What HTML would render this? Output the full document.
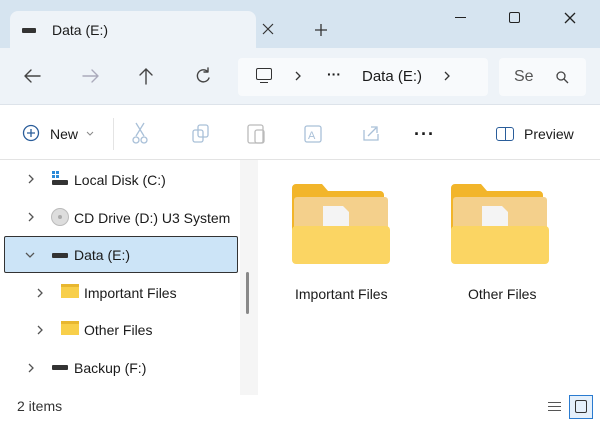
<!DOCTYPE html><html><head><style>
*{margin:0;padding:0;box-sizing:border-box}
body{width:600px;height:421px;overflow:hidden;font-family:"Liberation Sans",sans-serif;background:#fff;position:relative;color:#1a1a1a}
.a{position:absolute}
.t{font-size:14px;white-space:nowrap}
</style></head><body>
<div class="a" style="left:0;top:0;width:600px;height:50px;background:#d6e4f0"></div>
<div class="a" style="left:10px;top:11px;width:246px;height:40px;background:#eef3f8;border-radius:8px 8px 0 0"></div>
<div class="a" style="left:0;top:48px;width:600px;height:57px;background:#eef3f8;border-bottom:1px solid #dde3ea"></div>
<div class="a" style="left:22px;top:28px;width:14px;height:5px;background:#333;border-radius:1px"></div>
<div class="a t" style="left:52px;top:22px">Data (E:)</div>
<svg class="a" style="left:262px;top:23px" width="12" height="12" stroke="#333" stroke-width="1.2"><path d="M1 1l10 10M11 1L1 11"/></svg>
<svg class="a" style="left:314px;top:23px" width="14" height="14" stroke="#333" stroke-width="1.3"><path d="M7 1v12M1 7h12"/></svg>
<div class="a" style="left:455px;top:17px;width:11px;height:1px;background:#222"></div>
<div class="a" style="left:509px;top:12px;width:11px;height:11px;border:1.3px solid #222;border-radius:2px"></div>
<svg class="a" style="left:564px;top:12px" width="12" height="12" stroke="#222" stroke-width="1.3"><path d="M1 1l10 10M11 1L1 11"/></svg>
<svg class="a" style="left:0;top:60px" width="240" height="34" fill="none" stroke-width="1.4" stroke-linecap="round" stroke-linejoin="round">
<path d="M25 16h15M31 10l-6 6 6 6" stroke="#444"/>
<path d="M83 16h15M92 10l6 6-6 6" stroke="#aab"/>
<path d="M146 9v15M140 15l6-6 6 6" stroke="#444"/>
<path d="M208 12a6 6 0 1 0 1 6M208 8v4h-4" stroke="#444"/>
</svg>
<div class="a" style="left:238px;top:58px;width:250px;height:38px;background:#f8fafc;border-radius:4px"></div>
<div class="a" style="left:499px;top:58px;width:87px;height:38px;background:#f8fafc;border-radius:4px"></div>
<div class="a" style="left:256px;top:68px;width:16px;height:12px;border:1.4px solid #333;border-radius:2px"></div>
<div class="a" style="left:260px;top:82px;width:8px;height:1.4px;background:#333"></div>
<svg class="a" style="left:294px;top:71px" width="8" height="10" fill="none" stroke="#333" stroke-width="1.3"><path d="M2 1l4 4-4 4"/></svg>
<div class="a t" style="left:327px;top:66px;font-weight:bold">···</div>
<div class="a" style="left:362px;top:68px;font-size:15px">Data (E:)</div>
<svg class="a" style="left:443px;top:71px" width="8" height="10" fill="none" stroke="#333" stroke-width="1.3"><path d="M2 1l4 4-4 4"/></svg>
<div class="a" style="left:514px;top:68px;font-size:16px;color:#555">Se</div>
<svg class="a" style="left:555px;top:70px" width="14" height="14" fill="none" stroke="#444" stroke-width="1.3"><circle cx="6" cy="6" r="4"/><path d="M9 9l4 4"/></svg>
<svg class="a" style="left:22px;top:124px" width="18" height="18" fill="none" stroke="#2a5d9a" stroke-width="1.3"><circle cx="9" cy="9" r="7.5"/><path d="M9 5v8M5 9h8"/></svg>
<div class="a t" style="left:50px;top:126px">New</div>
<svg class="a" style="left:86px;top:131px" width="8" height="6" fill="none" stroke="#888" stroke-width="1"><path d="M1 1l3 3 3-3"/></svg>
<div class="a" style="left:113px;top:118px;width:1px;height:32px;background:#e4e4e4"></div>
<svg class="a" style="left:130px;top:120px" width="300" height="28" fill="none" stroke="#a9c0d8" stroke-width="1.3">
<path d="M6 3l8 13M14 3L6 16"/><circle cx="6" cy="20" r="3"/><circle cx="14" cy="20" r="3"/>
<rect x="68" y="5" width="10" height="12" rx="2"/><rect x="63" y="10" width="10" height="12" rx="2"/>
<rect x="118" y="5" width="15" height="18" rx="2" stroke="#bbb"/><rect x="125" y="10" width="9" height="13" rx="2" stroke="#bbb"/>
<rect x="175" y="6" width="16" height="16" rx="2"/><text x="178" y="19" font-size="11" fill="#a9c0d8" stroke="none" font-family="Liberation Sans">A</text>
<path d="M234 10v10h14v-6M238 16l8-8M241 7h6v6"/>
</svg>
<div class="a" style="left:414px;top:124px;font-size:18px;font-weight:bold;letter-spacing:1px">···</div>
<div class="a" style="left:496px;top:127px;width:18px;height:14px;border:1.4px solid #2a5d9a;border-radius:3px"></div>
<div class="a" style="left:505px;top:127px;width:1.4px;height:14px;background:#2a5d9a"></div>
<div class="a t" style="left:524px;top:126px">Preview</div>
<div class="a" style="left:0;top:159px;width:600px;height:1px;background:#e3e3e3"></div>
<div class="a" style="left:240px;top:160px;width:18px;height:235px;background:#f5f5f5"></div>
<div class="a" style="left:246px;top:272px;width:3px;height:42px;background:#888;border-radius:2px"></div>
<div class="a" style="left:4px;top:236px;width:234px;height:37px;background:#cce4f7;border:1px solid #333;border-radius:2px"></div>
<svg class="a" style="left:0;top:160px" width="50" height="235" fill="none" stroke="#555" stroke-width="1.3">
<path d="M29 15l4 4-4 4M29 53l4 4-4 4M26 93l4 4 4-4M38 129l4 4-4 4M38 166l4 4-4 4M29 204l4 4-4 4"/>
</svg>
<div class="a" style="left:52px;top:171px;width:3px;height:3px;background:#2a8ad8;box-shadow:4px 0 #2a8ad8,0 4px #2a8ad8,4px 4px #2a8ad8"></div>
<div class="a" style="left:52px;top:180px;width:16px;height:5px;background:#333;border-radius:1px"></div>
<div class="a t" style="left:74px;top:172px">Local Disk (C:)</div>
<div class="a" style="left:51px;top:208px;width:18px;height:18px;border-radius:50%;background:#ddd;border:1px solid #bbb"></div>
<div class="a" style="left:58px;top:215px;width:4px;height:4px;border-radius:50%;background:#aaa"></div>
<div class="a t" style="left:74px;top:210px">CD Drive (D:) U3 System</div>
<div class="a" style="left:52px;top:253px;width:16px;height:5px;background:#333;border-radius:1px"></div>
<div class="a t" style="left:74px;top:247px">Data (E:)</div>
<div class="a" style="left:61px;top:284px;width:18px;height:14px;background:#f8cf4a;border-top:3px solid #e8b730"></div>
<div class="a t" style="left:84px;top:285px">Important Files</div>
<div class="a" style="left:61px;top:321px;width:18px;height:14px;background:#f8cf4a;border-top:3px solid #e8b730"></div>
<div class="a t" style="left:84px;top:322px">Other Files</div>
<div class="a" style="left:52px;top:365px;width:16px;height:5px;background:#333;border-radius:1px"></div>
<div class="a t" style="left:74px;top:360px">Backup (F:)</div>
<svg class="a" style="left:290px;top:184px" width="270" height="82">
<g id="f"><path d="M2 4a4 4 0 0 1 4-4h26l6 7h52a4 4 0 0 1 4 4v64H2z" fill="#f2b52a"/>
<rect x="4" y="13" width="94" height="40" rx="3" fill="#f4d08c"/>
<path d="M33 22h20l6 6v26H33z" fill="#f4f4f4"/>
<path d="M2 46a4 4 0 0 1 4-4h90a4 4 0 0 1 4 4v30a4 4 0 0 1-4 4H6a4 4 0 0 1-4-4z" fill="#fbd563"/></g>
<use href="#f" x="159"/>
</svg>
<div class="a t" style="left:295px;top:286px">Important Files</div>
<div class="a t" style="left:468px;top:286px">Other Files</div>
<div class="a t" style="left:17px;top:398px;color:#333">2 items</div>
<div class="a" style="left:548px;top:402px;width:13px;height:9px;border-top:1px solid #555;border-bottom:1px solid #555"></div>
<div class="a" style="left:548px;top:406px;width:13px;height:1px;background:#555"></div>
<div class="a" style="left:569px;top:395px;width:24px;height:24px;border:1px solid #2a7bd0;background:#e5f0fb"></div>
<div class="a" style="left:575px;top:400px;width:12px;height:13px;border:1.2px solid #333;border-radius:2px"></div>
</body></html>
